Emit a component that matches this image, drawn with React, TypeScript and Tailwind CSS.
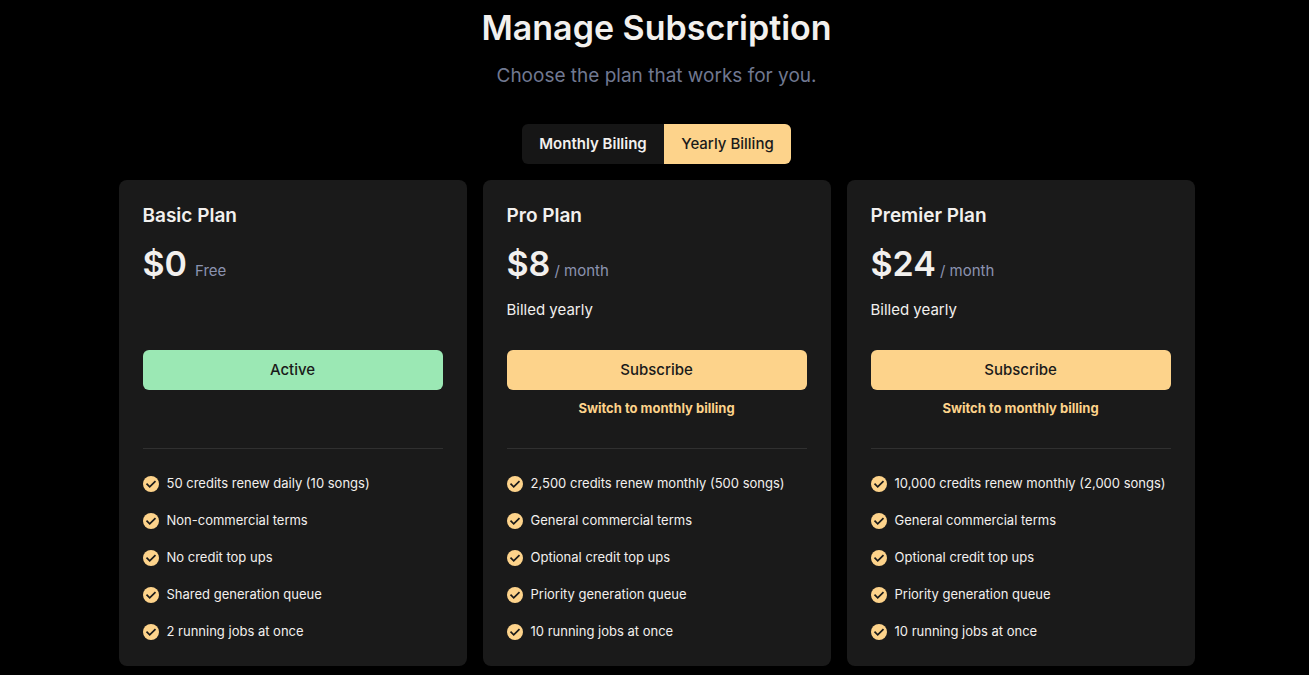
import React, { useState } from 'react';

type Plan = {
  name: string;
  price: { yearly: string; monthly: string };
  suffix: string;
  free?: boolean;
  features: string[];
};

const plans: Plan[] = [
  {
    name: 'Basic Plan',
    price: { yearly: '$0', monthly: '$0' },
    suffix: 'Free',
    free: true,
    features: [
      '50 credits renew daily (10 songs)',
      'Non-commercial terms',
      'No credit top ups',
      'Shared generation queue',
      '2 running jobs at once'
    ]
  },
  {
    name: 'Pro Plan',
    price: { yearly: '$8', monthly: '$10' },
    suffix: '/ month',
    features: [
      '2,500 credits renew monthly (500 songs)',
      'General commercial terms',
      'Optional credit top ups',
      'Priority generation queue',
      '10 running jobs at once'
    ]
  },
  {
    name: 'Premier Plan',
    price: { yearly: '$24', monthly: '$30' },
    suffix: '/ month',
    features: [
      '10,000 credits renew monthly (2,000 songs)',
      'General commercial terms',
      'Optional credit top ups',
      'Priority generation queue',
      '10 running jobs at once'
    ]
  }
];

const CheckIcon = () => (
  <svg viewBox="0 0 16 16" className="w-4 h-4 shrink-0" aria-hidden="true">
    <circle cx="8" cy="8" r="8" fill="#fdd38b" />
    <path d="M3.5 7.7 6.7 10.8 12.5 5.1" fill="none" stroke="#1a1a1a" strokeWidth="1.7" />
  </svg>
);

const App = () => {
  const [billing, setBilling] = useState<'monthly' | 'yearly'>('yearly');
  const other = billing === 'yearly' ? 'monthly' : 'yearly';

  return (
    <main className="min-h-screen bg-black pt-1 pb-2 pl-1 font-['Inter',sans-serif] text-[15px] text-[#f2f0ee]">
      {/* Heading */}
      <header className="text-center">
        <h1 className="text-[34px] leading-12 font-semibold">Manage Subscription</h1>
        <p className="mt-2 text-[19px] leading-8 text-[#707891]">Choose the plan that works for you.</p>
      </header>

      {/* Billing toggle */}
      <div className="mt-8 flex justify-center">
        <div className="flex overflow-hidden rounded-md bg-[#161616]">
          <button
            className={`h-10 w-[142px] ${
              billing === 'monthly' ? 'bg-[#fdd38b] font-medium text-[#1a1a1a]' : 'font-semibold'
            }`}
            onClick={() => setBilling('monthly')}
          >
            Monthly Billing
          </button>
          <button
            className={`h-10 w-[127px] ${
              billing === 'yearly' ? 'bg-[#fdd38b] font-medium text-[#1a1a1a]' : 'font-semibold'
            }`}
            onClick={() => setBilling('yearly')}
          >
            Yearly Billing
          </button>
        </div>
      </div>

      {/* Plans */}
      <div className="mx-auto mt-4 grid max-w-[1076px] grid-cols-3 gap-4">
        {plans.map((plan) => (
          <section key={plan.name} className="rounded-lg bg-[#1a1a1a] p-6">
            <h2 className="text-[19px] leading-6 font-semibold">{plan.name}</h2>
            <div className={`mt-3 flex h-12 items-baseline leading-12 ${plan.free ? 'gap-2' : 'gap-1'}`}>
              <span className="text-[34px] font-semibold">{plan.price[billing]}</span>
              <span className="text-[#8b93b0]">{plan.suffix}</span>
            </div>
            <p className="mt-[10px] h-6 leading-6">{!plan.free && `Billed ${billing}`}</p>

            <button
              className={`mt-7 h-10 w-full rounded-md font-medium text-[#1a1a1a] ${
                plan.free ? 'bg-[#9be8b4]' : 'bg-[#fdd38b]'
              }`}
            >
              {plan.free ? 'Active' : 'Subscribe'}
            </button>
            <div className="mt-2 flex h-5 justify-center">
              {!plan.free && (
                <button
                  className="text-[13px] leading-5 font-bold text-[#fdd38b]"
                  onClick={() => setBilling(other)}
                >
                  Switch to {other} billing
                </button>
              )}
            </div>

            <ul className="mt-[30px] space-y-4 border-t border-[#303030] pt-6">
              {plan.features.map((feature) => (
                <li key={feature} className="flex items-center gap-2 text-[13px] leading-[21px]">
                  <CheckIcon />
                  {feature}
                </li>
              ))}
            </ul>
          </section>
        ))}
      </div>
    </main>
  );
};

export default App;
